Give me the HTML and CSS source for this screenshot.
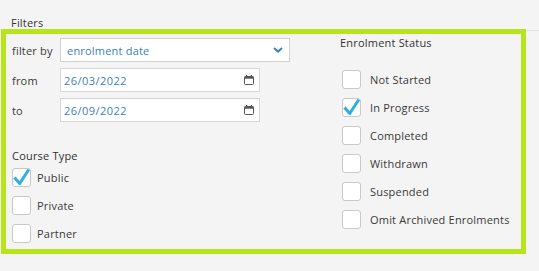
FILE: index.html
```html
<!DOCTYPE html>
<html lang="en">
<head>
<meta charset="utf-8">
<title>Filters</title>
<link rel="stylesheet" href="styles.css">
</head>
<body>
<div class="header">Filters</div>
<div class="box">
  <div class="col-left">
    <div class="field-row">
      <span class="field-label">filter by</span>
      <div class="select">
        <span class="select-text">enrolment date</span>
        <svg class="chevron" width="10" height="6" viewBox="0 0 10 6"><path d="M1 1 L5 4.6 L9 1" fill="none" stroke="#3a86c6" stroke-width="2"/></svg>
      </div>
    </div>
    <div class="field-row">
      <span class="field-label">from</span>
      <div class="date">
        <span class="date-text">26/03/2022</span>
        <svg class="cal" width="10" height="10" viewBox="0 0 10 10"><rect x="0.5" y="1.5" width="9" height="8" rx="1" fill="none" stroke="#555" stroke-width="1"/><rect x="0.5" y="1.5" width="9" height="2.2" fill="#555"/><rect x="2" y="0" width="1.2" height="2" fill="#555"/><rect x="6.8" y="0" width="1.2" height="2" fill="#555"/></svg>
      </div>
    </div>
    <div class="field-row">
      <span class="field-label">to</span>
      <div class="date">
        <span class="date-text">26/09/2022</span>
        <svg class="cal" width="10" height="10" viewBox="0 0 10 10"><rect x="0.5" y="1.5" width="9" height="8" rx="1" fill="none" stroke="#555" stroke-width="1"/><rect x="0.5" y="1.5" width="9" height="2.2" fill="#555"/><rect x="2" y="0" width="1.2" height="2" fill="#555"/><rect x="6.8" y="0" width="1.2" height="2" fill="#555"/></svg>
      </div>
    </div>
    <div class="section-title course-title">Course Type</div>
    <div class="checks left-checks">
      <div class="check-row"><span class="cb checked"><svg width="19" height="19" viewBox="0 0 19 19"><path d="M2.5 9.5 L7.7 15.5 L16.8 1.5" fill="none" stroke="#2cb0e2" stroke-width="3" stroke-linejoin="round"/></svg></span><span>Public</span></div>
      <div class="check-row"><span class="cb"></span><span>Private</span></div>
      <div class="check-row"><span class="cb"></span><span>Partner</span></div>
    </div>
  </div>
  <div class="col-right">
    <div class="section-title">Enrolment Status</div>
    <div class="checks right-checks">
      <div class="check-row"><span class="cb"></span><span>Not Started</span></div>
      <div class="check-row"><span class="cb checked"><svg width="19" height="19" viewBox="0 0 19 19"><path d="M2.5 9.5 L7.7 15.5 L16.8 1.5" fill="none" stroke="#2cb0e2" stroke-width="3" stroke-linejoin="round"/></svg></span><span>In Progress</span></div>
      <div class="check-row"><span class="cb"></span><span>Completed</span></div>
      <div class="check-row"><span class="cb"></span><span>Withdrawn</span></div>
      <div class="check-row"><span class="cb"></span><span>Suspended</span></div>
      <div class="check-row"><span class="cb"></span><span>Omit Archived Enrolments</span></div>
    </div>
  </div>
</div>
</body>
</html>
```
FILE: styles.css
```css
html, body {
  margin: 0;
  padding: 0;
  background: #f4f4f4;
}
body {
  font-family: "Open Sans", "Liberation Sans", sans-serif;
  font-size: 11px;
  line-height: 15px;
  letter-spacing: 0.2px;
  color: #3a3a3a;
}
.header {
  height: 15px;
  padding: 15px 0 0 11px;
  border-bottom: 1px solid #e2e2e2;
  color: #333;
}
.box {
  margin: -2px 13px 0 1px;
  border: 5px solid #b8e41c;
  height: 215px;
  display: flex;
  padding-left: 6px;
}
.col-left {
  width: 328px;
  padding-top: 4px;
  display: flex;
  flex-direction: column;
}
.field-row {
  display: flex;
  align-items: center;
  height: 24px;
  margin-bottom: 6px;
}
.field-label {
  width: 48px;
}
.select {
  width: 230px;
  height: 24px;
  box-sizing: border-box;
  border: 1px solid #d2d2d2;
  background: #fff;
  display: flex;
  align-items: center;
  padding: 0 6px 0 6px;
}
.select-text {
  flex: 1;
  color: #3a7fc2;
}
.chevron {
  display: block;
}
.date {
  width: 200px;
  height: 24px;
  box-sizing: border-box;
  border: 1px solid #d6d6d6;
  background: #fff;
  display: flex;
  align-items: center;
  padding: 0 5px 0 3px;
}
.date-text {
  flex: 1;
  color: #3a7fc2;
  letter-spacing: 0.45px;
}
.cal {
  display: block;
}
.section-title {
  color: #333;
}
.course-title {
  margin-top: 20px;
}
.checks {
  display: flex;
  flex-direction: column;
  gap: 9px;
}
.left-checks {
  margin-top: 5px;
}
.check-row {
  display: flex;
  align-items: center;
  height: 19px;
  gap: 6px;
}
.right-checks {
  margin-top: 20px;
  padding-left: 2px;
}
.right-checks .check-row {
  gap: 9px;
}
.cb {
  width: 19px;
  height: 19px;
  box-sizing: border-box;
  border: 1px solid #c9c9c9;
  border-radius: 3px;
  background: #fff;
  position: relative;
  flex: none;
}
.cb svg {
  position: absolute;
  left: -1px;
  top: -1px;
}
.col-right {
  padding-top: 1px;
}
```
